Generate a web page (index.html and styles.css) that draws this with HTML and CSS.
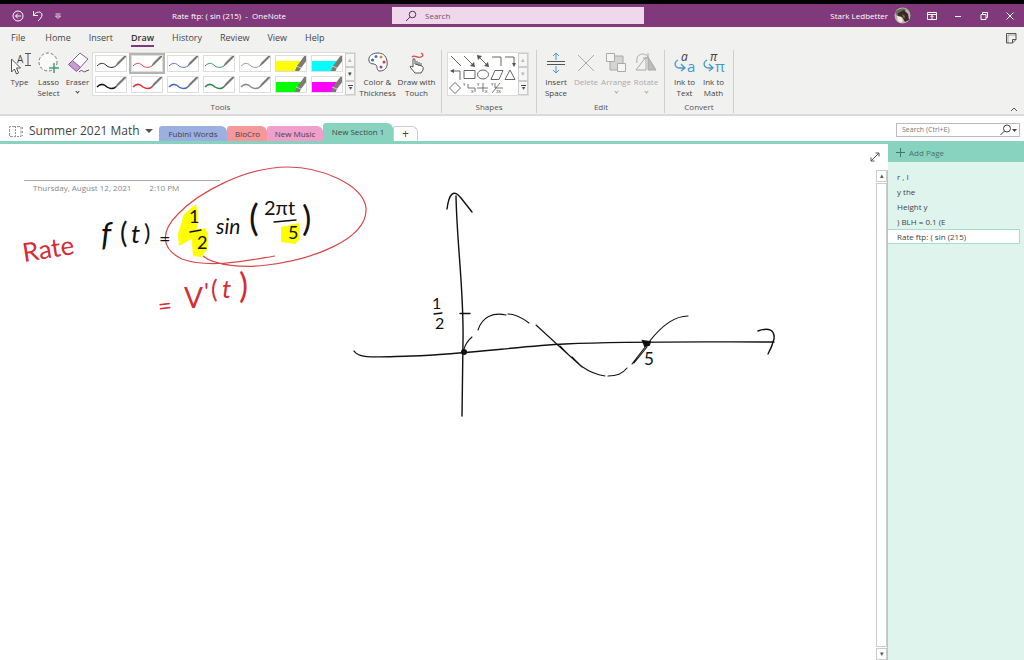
FILE: index.html
```html
<!DOCTYPE html>
<html lang="en">
<head>
<meta charset="utf-8">
<title>Rate ftp: ( sin (215) - OneNote</title>
<link rel="stylesheet" href="styles.css">
<script src="app.js" defer></script>
</head>
<body>
<svg class="defs" aria-hidden="true">
  <symbol id="pen" viewBox="0 0 32 17"><path d="M2 11c4-4 7-3 10 0 3 2 7 2 10-1" fill="none" stroke="currentColor" stroke-width="1"/><path d="M20 12l2-4 8-8h2v1l-8 8z" fill="#777"/></symbol>
  <symbol id="penbold" viewBox="0 0 32 17"><path d="M2 11c4-4 7-3 10 0 3 2 7 2 10-1" fill="none" stroke="currentColor" stroke-width="1.5"/><path d="M20 12l2-4 8-8h2v1l-8 8z" fill="#777"/></symbol>
  <symbol id="marker" viewBox="0 0 32 17"><path d="M0 6h27l-2 10H0z" fill="currentColor"/><path d="M20 16l2-5 4 2-2 3zM22 11l8-11h2v5l-6 8z" fill="#7b7b73"/><path d="M21 11l5 2" stroke="#fff" stroke-width=".6"/></symbol>
</svg>
<header class="titlebar">
  <div class="quick">
    <button aria-label="Back"><svg width="12" height="12" viewBox="0 0 12 12"><circle cx="6" cy="6" r="5"/><path d="M9 6H3.500M6 3.500L3.500 6L6 8.500"/></svg></button>
    <button aria-label="Undo"><svg width="12" height="12" viewBox="0 0 12 12"><path d="M1.500 1v4.500H6M1.500 5.500C4 1 10 1 10 5c0 2-2 4-4 6"/></svg></button>
    <button aria-label="Customize toolbar"><svg width="12" height="12" viewBox="0 0 12 12" stroke-width=".8"><path d="M3.500 4h5M3.500 6h5L6 8.500z"/></svg></button>
  </div>
  <h1 class="doc">Rate ftp: ( sin (215)&nbsp; -&nbsp; OneNote</h1>
  <label class="find"><svg width="12" height="12" viewBox="0 0 12 12"><circle cx="7.500" cy="4.500" r="3.300"/><path d="M5 7L1 11"/></svg><input type="text" aria-label="Search" placeholder="Search"></label>
  <div class="account">
    <span>Stark Ledbetter</span>
    <svg class="avatar" width="17" height="17" viewBox="0 0 17 17" aria-hidden="true"><circle cx="8.500" cy="8.500" r="8" fill="#b8b7a6"/><path d="M1 5Q6 0 12 2l-2 4-7 3z" fill="#666d59"/><path d="M4 6l6-3 4 4 1 6-4 2-3-5-4-1z" fill="#372a27"/><path d="M3 9l4 1 2 3-2 3-3-2z" fill="#f0e8e2"/><path d="M8 7l3 2-1 3z" fill="#a7614f"/></svg>
  </div>
  <div class="winbtns">
    <button aria-label="Ribbon options"><svg width="12" height="12" viewBox="0 0 12 12"><path d="M1.500 2.500h9v7h-9zM1.500 4.500h9M6 9V5.500M4.500 7L6 5.500L7.500 7"/></svg></button>
    <button aria-label="Minimize"><svg width="12" height="12" viewBox="0 0 12 12"><path d="M3 6.500h6"/></svg></button>
    <button aria-label="Restore"><svg width="12" height="12" viewBox="0 0 12 12"><path d="M3 4.500h5v5H3zM4.500 4.500V2.500h5v5H8"/></svg></button>
    <button aria-label="Close"><svg width="12" height="12" viewBox="0 0 12 12"><path d="M2.500 2.500l7 7M9.500 2.500l-7 7"/></svg></button>
  </div>
</header>

<nav class="menu" aria-label="Ribbon tabs">
  <button>File</button><button>Home</button><button>Insert</button><button class="on">Draw</button><button>History</button><button>Review</button><button>View</button><button>Help</button>
  <button class="feed" aria-label="Sticky notes"><svg width="12" height="12" viewBox="0 0 12 12" fill="none" stroke="#555"><path d="M1.500 1.500h9.500v6L7.500 11h-6zM11 7.500H7.500V11" /><path d="M3 11V3h8" stroke-width=".5"/></svg></button>
</nav>

<section class="ribbon" aria-label="Draw">
  <div class="group">
    <div class="items">
      <button class="tool"><svg width="24" height="24" viewBox="0 0 24 24"><path d="M3.500 8v13l3-3 2 5 2-1-2-5h4z" fill="#fff" stroke="#555"/><text x="9" y="12" font-size="10">A</text><path d="M17 2.500h6M20 3v12M17 14.500h6" stroke="#555" fill="none"/></svg><span>Type</span></button>
      <button class="tool"><svg width="24" height="24" viewBox="0 0 24 24"><circle cx="11" cy="11" r="9" fill="#fafafa" stroke="#777" stroke-dasharray="3 2"/><path d="M17 12v10M12 17h10" stroke="#4a9c78" stroke-width="1.500"/></svg><span>Lasso<br>Select</span></button>
      <button class="tool"><svg width="24" height="24" viewBox="0 0 24 24"><path d="M14 2l8 6-11 12-8-7z" fill="#fff" stroke="#8a5c98"/><path d="M6.500 9.500l8 7-4 4-8-7z" fill="#c99bd6" stroke="#8a5c98"/><path d="M13 21c4-4 4 2 7-1l3-1" fill="none" stroke="#555"/></svg><span>Eraser</span><i class="chev"></i></button>
      <div class="gallery">
        <div class="pens" id="pens"></div>
        <div class="spin"><button aria-label="Previous pens" disabled>&#9652;</button><button aria-label="Next pens">&#9662;</button><button aria-label="More pens"><span class="more">&#9662;</span></button></div>
      </div>
      <button class="tool wide"><svg width="24" height="24" viewBox="0 0 24 24"><path d="M12 2C5 2 2 6 3 10s5 2 7 4 0 6 4 6c5 0 8-4 7-10S16 2 12 2z" fill="#fff" stroke="#555"/><g><circle cx="6.500" cy="9" r="1.500" fill="#247c72"/><circle cx="10" cy="5.500" r="1.500" fill="#357ac5"/><circle cx="15" cy="6" r="1.500" fill="#e18236"/><circle cx="18" cy="11" r="1.500" fill="#c83c3c"/><circle cx="15" cy="16" r="1.500" fill="#9b419e"/></g></svg><span>Color &amp;<br>Thickness</span></button>
      <button class="tool wide"><svg width="24" height="24" viewBox="0 0 24 24"><path d="M7 6c3-3 5 2 9 0 3-1 2-3 0-4" fill="none" stroke="#dc4545" stroke-width="1.300"/><path d="M8 8q2-1 2 1v4l7 2q2 1 1 4l-2 3h-6l-5-6q0-2 3 0z" fill="#fff" stroke="#555"/><path d="M12 10v4M14 11v4M16 12v3" stroke="#555"/></svg><span>Draw with<br>Touch</span></button>
    </div>
    <h2>Tools</h2>
  </div>
  <div class="group">
    <div class="items">
      <div class="gallery">
        <svg class="shapes" width="70" height="42" viewBox="0 0 70 42" fill="none" stroke="#555" stroke-width=".9">
          <path d="M3 3l10 10M16 3l10 10M30 3l10 10M44 4h9v9M57 4h9v9"/><path d="M27 14l-5-1 4-4zM41 14l-5-1 4-4zM29 2l5 1-4 4zM64 10h4l-2 4zM2 18l4-2v4z" fill="#555" stroke="none"/>
          <path d="M3 18h9v9M16 17.500h11v8H16zM47 17.500h8l-4 9h-8zM62 17l5 9.500H57zM7 29.500l5.500 5.500L7 40.500 1.500 35z"/><ellipse cx="35" cy="21.500" rx="5.500" ry="4.500"/>
          <path d="M20 31v4h7v4M35 30v9M29 35h11M47 30v5h8M44 40l8-10" stroke-width=".8"/>
          <g class="tiny"><text x="15" y="33">Y</text><text x="23" y="40">X</text><text x="29" y="33">Y</text><text x="37" y="40">X</text><text x="43" y="33">Y</text><text x="48" y="40">2X</text></g>
        </svg>
        <div class="spin"><button aria-label="Previous shapes" disabled>&#9652;</button><button aria-label="Next shapes" disabled>&#9662;</button><button aria-label="More shapes"><span class="more">&#9662;</span></button></div>
      </div>
    </div>
    <h2>Shapes</h2>
  </div>
  <div class="group edit">
    <div class="items">
      <button class="tool"><svg width="24" height="24" viewBox="0 0 24 24" fill="none"><path d="M3 10.500h18M3 13.500h18" stroke="#555"/><path d="M12 9V2M9 5l3-3 3 3M12 15v7M9 19l3 3 3-3" stroke="#4299cc"/></svg><span>Insert<br>Space</span></button>
      <button class="tool" disabled><svg width="24" height="24" viewBox="0 0 24 24"><path d="M4 4l16 16M20 4L4 20" stroke="#aaa"/></svg><span>Delete</span></button>
      <button class="tool" disabled><svg width="24" height="24" viewBox="0 0 24 24" stroke="#aaa"><path d="M6 5h13v14H6z" fill="#d4d4d4"/><path d="M2.500 2.500h8v8h-8z" fill="#f5f5f5"/><path d="M13.500 12.500h8v8h-8z" fill="#f5f5f5"/></svg><span>Arrange</span><i class="chev"></i></button>
      <button class="tool" disabled><svg width="24" height="24" viewBox="0 0 24 24" stroke="#aaa" fill="none"><path d="M12 6v13H2z"/><path d="M14 6v13h8z" fill="#bbb"/><path d="M3 12C1 2 11 1 14 6M14 2v5h-5"/></svg><span>Rotate</span><i class="chev"></i></button>
    </div>
    <h2>Edit</h2>
  </div>
  <div class="group">
    <div class="items">
      <button class="tool"><svg width="24" height="24" viewBox="0 0 24 24"><text x="8" y="10" font-size="12" font-style="italic">a</text><text x="14" y="21" font-size="15" class="blue">a</text><path d="M5 9c-5 3-3 8 2 8h4M8 13l4 4-4 3" fill="none" stroke="#4299cc" stroke-width="1.300"/></svg><span>Ink to<br>Text</span></button>
      <button class="tool"><svg width="24" height="24" viewBox="0 0 24 24"><text x="8" y="10" font-size="12" font-style="italic">π</text><text x="13" y="21" font-size="15" class="blue">π</text><path d="M5 9c-5 3-3 8 2 8h3M7 13l4 4-4 3" fill="none" stroke="#4299cc" stroke-width="1.300"/></svg><span>Ink to<br>Math</span></button>
    </div>
    <h2>Convert</h2>
  </div>
  <button class="collapse" aria-label="Collapse ribbon"><svg width="8" height="6" viewBox="0 0 8 6" fill="none" stroke="#555"><path d="M1 5l3-3 3 3"/></svg></button>
</section>

<div class="sections">
  <button class="notebook"><svg width="16" height="13" viewBox="0 0 16 13" fill="none" stroke="#999"><path d="M7 1.500H1.500v10H7M9 1.500h4v10H9" stroke-dasharray="3 1"/><path d="M7.500 1v11" stroke-dasharray="2 1"/><path d="M14.500 2v2M14.500 6v2M14.500 10v1"/></svg><span>Summer 2021 Math</span><i class="drop"></i></button>
  <div class="tabs">
    <button class="tab blue-tab">Fubini Words</button><button class="tab red-tab">BioCro</button><button class="tab pink-tab">New Music</button><button class="tab green-tab">New Section 1</button><button class="tab add" aria-label="Add section">+</button>
  </div>
  <label class="pagefind"><input type="text" aria-label="Search (Ctrl+E)" placeholder="Search (Ctrl+E)"><svg width="20" height="12" viewBox="0 0 20 12" fill="none" stroke="#444"><circle cx="8" cy="4.500" r="3.500"/><path d="M5.500 7L1.500 11"/><path d="M13 5h5l-2.500 3z" fill="#444" stroke="none"/></svg></label>
</div>

<main class="work">
  <article class="page">
    <div class="stamp"><span>Thursday, August 12, 2021</span><span>2:10 PM</span></div>
    <svg class="ink" role="img" aria-label="Ink notes">
      <g transform="translate(0 -144)">
        <g fill="#ff0">
          <path d="M184 214l12-10 2 12-2 20-8 5-9 5-1-12z"/><path d="M191 231l14-3 3 6-1 16-6 7-8-1z"/><path d="M281 227l18-4 1 16-5 5-14-2z"/>
        </g>
        <g class="red-ink">
          <path d="M203 256C215 266 245 268 267 265C310 260 368 240 366 208C363 184 320 167 288 167C245 167 198 193 178 214C160 232 161 249 182 259C210 269 250 260 275 256"/>
        </g>
        <g class="pen-red">
          <text font-size="26" transform="translate(24 262) rotate(-9)">Rate</text>
          <text x="158" y="314" font-size="24" transform="rotate(-7 166 306)">=</text>
          <text x="184" y="308" font-size="28">V</text><text x="204" y="300" font-size="24">'</text>
          <text x="211" y="298" font-size="25">(</text><text x="222" y="298" font-size="26" font-style="italic">t</text><text x="239" y="298" font-size="34">)</text>
        </g>
        <g class="pen-black">
          <text x="101" y="246" font-size="32" font-style="italic">f</text><text x="120" y="243" font-size="28">(</text><text x="131" y="243" font-size="26" font-style="italic">t</text><text x="144" y="241" font-size="24">)</text>
          <text x="159" y="246" font-size="20">=</text>
          <text x="189" y="223" font-size="18">1</text><path d="M190 232l11-2"/><text x="197" y="249" font-size="18">2</text>
          <text x="216" y="234" font-size="21" font-style="italic">sin</text>
          <text x="249" y="231" font-size="37">(</text><text x="264" y="215" font-size="20">2πt</text><path d="M274 222l22-2"/><text x="288" y="239" font-size="18">5</text><text x="302" y="231" font-size="35">)</text>
          <path d="M354 351c5 8 20 6 58 5C470 354 520 346 565 344C635 341 700 342 774 342M456 196c1 50 8 95 7 145l-1 75M447 209c2-16 7-20 14-11l11 14M460 313.500h10M434 314l8-1M758 331c11-4 17-1 16 8q-2 8-6 15"/>
          <text x="432" y="309" font-size="16">1</text><text x="435" y="329" font-size="16">2</text>
          <g class="thin"><path d="M464 349q2-7 8-12M478 330c4-13 15-18 28-15M508 314q9 0 21 9M536 325l24 22 22 20M560 346c15 15 25 27 45 30M608 376c9 0 14-2 19-8M632 364l17-22q20-26 39-26M634 363l13-16M572 357l10 10"/></g>
          <circle cx="464" cy="352" r="3"/><path d="M643 341l7 1-1 3-4 1z" class="dot"/>
          <text x="644" y="365" font-size="17">5</text>
        </g>
      </g>
    </svg>
    <button class="expand" aria-label="Full page view"><svg width="10" height="10" viewBox="0 0 10 10" fill="none" stroke="#555"><path d="M1 9l8-8M5.500 1H9v3.500M1 5.500V9h3.500"/></svg></button>
  </article>
  <div class="scroll"><button aria-label="Scroll up">&#9652;</button><div class="track"></div><button aria-label="Scroll down">&#9662;</button></div>
  <aside class="pages">
    <button class="addpage"><svg width="11" height="11" viewBox="0 0 11 11" stroke="#476"><path d="M5.500 1v9M1 5.500h9"/></svg>Add Page</button>
    <ul>
      <li><a href="#">r , I</a></li><li><a href="#">y the</a></li><li><a href="#">Height y</a></li><li><a href="#">) BLH = 0.1 (E</a></li><li><a href="#" class="current">Rate ftp: ( sin (215)</a></li>
    </ul>
  </aside>
</main>
</body>
</html>
```

FILE: styles.css
```css
* { box-sizing: border-box; }
body { margin: 0; min-height: 100vh; display: flex; flex-direction: column; background: #fff; color: #444; font: 8px/12px "Open Sans", "Noto Sans", sans-serif; }
button, input { font: inherit; color: inherit; border: 0; background: none; padding: 0; margin: 0; }
h1, h2, ul { margin: 0; padding: 0; font: inherit; list-style: none; }
svg { display: block; flex: none; }
.defs { width: 0; height: 0; position: absolute; }

.titlebar { border-top: 4px solid #000; height: 27px; background: #80397b; color: #fff; display: grid; grid-template-columns: 68px 324px 252px 1fr auto; align-items: center; }
.titlebar svg:not(.avatar) { fill: none; stroke: currentColor; }
.quick { display: flex; gap: 8px; padding-left: 12px; }
.doc { text-align: center; padding-right: 2px; }
.find { height: 17px; background: #efd7ec; color: #653060; display: flex; align-items: center; gap: 8px; padding-left: 13px; }
.find input { flex: 1; min-width: 0; }
.find input::placeholder { color: #76516f; opacity: 1; }
.account { display: flex; align-items: center; justify-content: flex-end; gap: 6px; }
.winbtns { display: flex; gap: 14px; padding: 0 8px 0 15px; }

.menu { background: #f1f1f0; display: flex; gap: 18px; padding: 4px 7px 0 11px; height: 23px; font-size: 9px; }
.menu button { height: 16px; border-bottom: 2px solid transparent; }
.menu button:first-child { margin-right: 2px; }
.menu .on { font-weight: 600; border-color: #80397b; color: #333; }
.menu .feed { margin-left: auto; }

.ribbon { background: #f1f1f0; border-bottom: 2px solid #dadada; display: flex; height: 66px; }
.group { display: flex; flex-direction: column; border-right: 1px solid #cfcfcf; margin-bottom: 1px; padding: 0 5px; }
.group h2 { text-align: center; color: #555; }
.items { display: flex; height: 52px; padding-top: 1px; }
.tool { width: 29px; display: flex; flex-direction: column; align-items: center; justify-content: flex-start; line-height: 11px; white-space: nowrap; }
.edit .tool { width: 30px; }
.edit { padding: 0 3px 0 4px; }
.tool svg { margin-bottom: 1px; overflow: visible; }
.tool:disabled { color: #aaa; }
.tool.wide { width: 39px; }
.tool text { fill: #444; font-family: "Open Sans", sans-serif; }
.tool .blue { fill: #4299cc; }
.chev { width: 3px; height: 3px; border: solid currentColor; border-width: 0 1px 1px 0; transform: rotate(45deg); margin-top: 3px; }
.gallery { display: flex; height: 44px; border: 1px solid #ddd; background: #fff; margin: 1px 2px 0 0; }
.pens { display: grid; grid-template-columns: repeat(7, 36px); grid-template-rows: repeat(2, 21px); }
.pen { display: grid; place-items: center; border: 2px solid transparent; }
.pen svg { width: 32px; height: 17px; outline: 1px solid #ddd; outline-offset: -1px; }
.pen.sel { border-color: #b5b5b5; }
.spin { width: 10px; display: flex; flex-direction: column; }
.spin button { flex: 1; background: #f6f6f6; border: 1px solid #ccc; font-size: 7px; line-height: 6px; color: #444; }
.spin button:disabled { color: #bbb; }
.more { display: block; width: 5px; margin: auto; border-top: 1px solid #444; font-size: 6px; line-height: 5px; }
.tiny text { font: 600 4px "Open Sans", sans-serif; fill: #555; stroke: none; }
.collapse { margin: auto 6px 2px auto; }

.sections { display: flex; align-items: flex-end; height: 28px; border-bottom: 3px solid #88d3c0; }
.notebook { display: flex; align-items: center; gap: 5px; font-size: 12px; line-height: 16px; padding: 0 7px 2px 8px; width: 159px; white-space: nowrap; }
.drop { border: solid transparent; border-width: 4px 4px 0; border-top-color: #555; }
.tabs { display: flex; align-items: flex-end; }
.tab { height: 15px; padding: 0 8px; border-radius: 3px 6px 0 0; white-space: nowrap; }
.blue-tab { background: #9bafe1; width: 68px; }
.red-tab { background: #f4989c; width: 40px; }
.pink-tab { background: #ee9fcb; width: 56px; padding: 0; }
.green-tab { background: #88d3c0; width: 70px; height: 18px; padding: 0; }
.add { border: 1px solid #ccc; border-bottom: 0; width: 25px; font-size: 12px; }
.pagefind { margin: 0 4px 4px auto; width: 124px; height: 14px; border: 1px solid #bbb; display: flex; align-items: center; padding-left: 5px; }
.pagefind input { flex: 1; min-width: 0; font-size: 7px; }
.pagefind input::placeholder { color: #777; opacity: 1; }

.work { flex: 1; display: flex; }
.page { flex: 1; position: relative; padding: 36px 0 0 24px; }
.stamp { width: 196px; border-top: 1px solid #aaa; padding: 1px 0 0 9px; display: flex; gap: 18px; color: #888; white-space: nowrap; }
.ink { position: absolute; inset: 0; width: 100%; height: 100%; }
.ink text { font-family: Lato, sans-serif; font-weight: 400; }
.red-ink { fill: none; stroke: #d8474c; stroke-width: 1.2; }
.pen-red { fill: #d62c35; }
.pen-black { fill: #111; }
.pen-black path { fill: none; stroke: #111; stroke-width: 1.4; stroke-linecap: round; }
.pen-black .thin path { stroke-width: 1.1; }
.pen-black .dot { fill: #111; stroke-width: 2; }
.expand { position: absolute; top: 8px; right: -4px; }
.scroll { width: 12px; margin-top: 26px; display: flex; flex-direction: column; gap: 1px; border-right: 1px solid #a8cfc4; }
.scroll button { height: 12px; border: 1px solid #ccc; font-size: 7px; line-height: 8px; color: #555; }
.track { flex: 1; border: 1px solid #ccc; }
.pages { width: 136px; background: #dff4ed; margin-top: -3px; }
.addpage { display: flex; align-items: center; gap: 3px; width: 100%; height: 21px; padding-left: 7px; padding-top: 2px; background: #88d3c0; color: #4d6f66; }
.pages ul { padding-top: 7px; }
.pages a { display: block; height: 15px; line-height: 14px; padding-left: 9px; margin-right: 4px; border: 1px solid transparent; border-left: 0; color: #444; text-decoration: none; }
.pages .current { background: #fff; border-color: #a9dccd; }
```

FILE: app.js
```js
const pens = [
  ["pen", "#222"], ["pen", "#e0464d"], ["pen", "#5b72c4"], ["pen", "#3b9560"], ["pen", "#999"], ["marker", "#ff0"], ["marker", "#0ff"],
  ["penbold", "#111"], ["penbold", "#e5262c"], ["penbold", "#4169b8"], ["penbold", "#27834a"], ["penbold", "#888"], ["marker", "#0f0"], ["marker", "#f0f"]
];
document.getElementById("pens").innerHTML = pens.map(([shape, color], i) =>
  `<button class="pen${i === 1 ? " sel" : ""}" aria-label="Pen ${i + 1}"><svg style="color:${color}"><use href="#${shape}"/></svg></button>`
).join("");
```
